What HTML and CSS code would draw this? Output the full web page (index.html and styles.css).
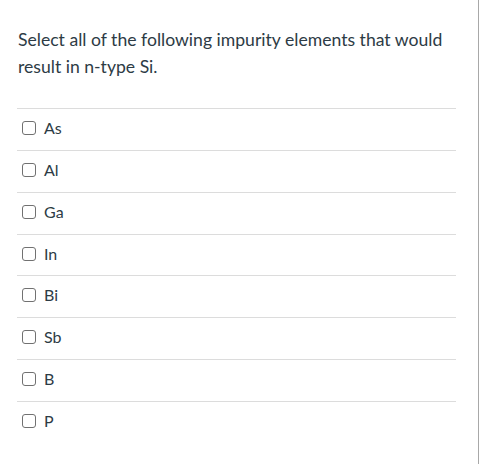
FILE: index.html
```html
<!DOCTYPE html>
<html>
<head>
<meta charset="utf-8">
<link rel="stylesheet" href="styles.css">
</head>
<body>
<div class="frame">
  <div class="question">
    <p class="prompt">Select all of the following impurity elements that would result in n-type Si.</p>
    <ul class="answers">
      <li class="answer"><span class="box"></span><span class="label">As</span></li>
      <li class="answer"><span class="box"></span><span class="label">Al</span></li>
      <li class="answer"><span class="box"></span><span class="label">Ga</span></li>
      <li class="answer"><span class="box"></span><span class="label">In</span></li>
      <li class="answer"><span class="box"></span><span class="label">Bi</span></li>
      <li class="answer"><span class="box"></span><span class="label">Sb</span></li>
      <li class="answer"><span class="box"></span><span class="label">B</span></li>
      <li class="answer"><span class="box"></span><span class="label">P</span></li>
    </ul>
  </div>
</div>
</body>
</html>
```
FILE: styles.css
```css
html, body {
  margin: 0;
  padding: 0;
  background: #ffffff;
}
body {
  font-family: Lato, "Liberation Sans", sans-serif;
  color: #2d3b45;
}
.frame {
  width: 478px;
  height: 464px;
  border-right: 1px solid #a8a8a8;
  box-sizing: content-box;
}
.question {
  width: 439px;
  padding: 26px 0 0 17px;
}
.prompt {
  margin: 0 0 28px 1px;
  font-size: 17.6px;
  line-height: 27px;
}
.answers {
  list-style: none;
  margin: 0;
  padding: 0;
}
.answer {
  box-sizing: border-box;
  height: 41.86px;
  border-top: 1px solid #dcdcdc;
  display: flex;
  align-items: center;
  padding: 0 0 3px 5px;
  font-size: 16px;
}
.box {
  width: 12px;
  height: 12px;
  border: 1px solid #717171;
  border-radius: 3px;
  margin-right: 8px;
  flex: none;
}
.label {
  line-height: 18px;
}
```
